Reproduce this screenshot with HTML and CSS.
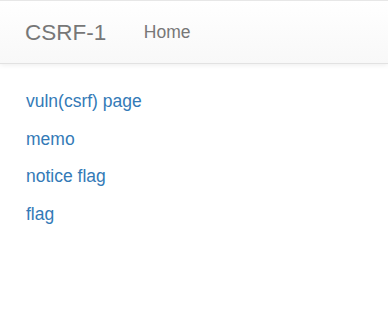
FILE: index.html
```html
<!DOCTYPE html>
<html>
<head>
<meta charset="utf-8">
<title>CSRF-1</title>
<link rel="stylesheet" href="styles.css">
</head>
<body>
<nav class="navbar">
  <a class="brand" href="#">CSRF-1</a>
  <a class="nav-link" href="#">Home</a>
</nav>
<main class="content">
  <p><a href="#">vuln(csrf) page</a></p>
  <p><a href="#">memo</a></p>
  <p><a href="#">notice flag</a></p>
  <p><a href="#">flag</a></p>
</main>
</body>
</html>
```
FILE: styles.css
```css
html, body {
  margin: 0;
  padding: 0;
  background: #fff;
}
body {
  font-family: "Liberation Sans", Arial, Helvetica, sans-serif;
  font-size: 17.5px;
  line-height: 25px;
  color: #333;
}
a {
  text-decoration: none;
}
.navbar {
  display: flex;
  align-items: flex-start;
  height: 62px;
  border-top: 1px solid #e7e7e7;
  border-bottom: 1px solid #e2e2e2;
  background-image: linear-gradient(to bottom, #ffffff 0, #f8f8f8 100%);
  box-shadow: inset 0 1px 0 rgba(255,255,255,.15), 0 1px 5px rgba(0,0,0,.075);
  padding-left: 25px;
  margin-bottom: 25px;
}
.brand {
  font-size: 22.5px;
  line-height: 25px;
  padding: 18.75px 18.75px 18.75px 0;
  color: #777;
}
.nav-link {
  font-size: 17.5px;
  line-height: 25px;
  padding: 18.75px;
  color: #777;
}
.content {
  padding-left: 26px;
}
.content p {
  margin: 0 0 12.5px;
}
.content a {
  color: #337ab7;
}
```
